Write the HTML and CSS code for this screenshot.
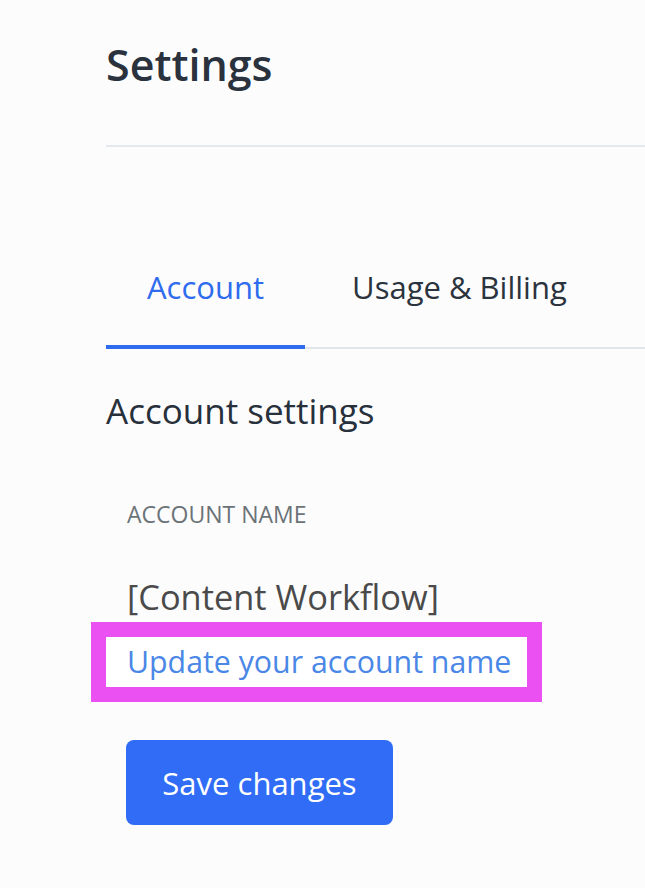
FILE: index.html
```html
<!DOCTYPE html>
<html lang="en">
<head>
<meta charset="utf-8">
<title>Settings</title>
<link rel="stylesheet" href="styles.css">
</head>
<body>
<main class="page">
  <header class="page-header">
    <h1 class="page-title">Settings</h1>
  </header>
  <nav class="tabs">
    <a class="tab tab-active" href="#">Account</a>
    <a class="tab" href="#">Usage &amp; Billing</a>
  </nav>
  <section class="panel">
    <h2 class="panel-title">Account settings</h2>
    <div class="field">
      <div class="field-label">Account name</div>
      <div class="field-value">[Content Workflow]</div>
      <a class="field-link" href="#">Update your account name</a>
    </div>
    <button class="btn-primary" type="button">Save changes</button>
  </section>
</main>
</body>
</html>
```

FILE: styles.css
```css
html, body {
  margin: 0;
  padding: 0;
  background: #fcfcfd;
}
body {
  font-family: "Open Sans", "Noto Sans", sans-serif;
  overflow: hidden;
}
.page {
  padding-left: 106px;
}
.page-header {
  padding-top: 37px;
  padding-bottom: 52px;
  border-bottom: 2px solid #e5e8ec;
}
.page-title {
  margin: 0;
  font-size: 43px;
  line-height: 56px;
  font-weight: 600;
  color: #29323d;
}
.tabs {
  display: flex;
  gap: 6px;
  margin-top: 120px;
  border-bottom: 2px solid #e2e5e9;
}
.tab {
  display: block;
  padding: 0 41px 38px;
  font-size: 31px;
  line-height: 40px;
  color: #2b333d;
  text-decoration: none;
}
.tab-active {
  color: #2f6bed;
  border-bottom: 4px solid #2f6bed;
  margin-bottom: -2px;
}
.panel {
  padding-top: 40px;
}
.panel-title {
  margin: 0;
  font-size: 35px;
  line-height: 44px;
  font-weight: 400;
  color: #27303b;
}
.field {
  margin-top: 67px;
}
.field-label {
  padding-left: 21px;
  font-size: 23px;
  line-height: 28px;
  text-transform: uppercase;
  color: #6b7377;
}
.field-value {
  padding-left: 21px;
  margin-top: 47px;
  font-size: 34.4px;
  line-height: 44px;
  color: #4a4a4a;
}
.field-link {
  display: block;
  width: fit-content;
  margin-top: 18px;
  padding: 0 16px 0 21px;
  font-size: 30.3px;
  line-height: 50px;
  color: #4a87e6;
  text-decoration: none;
  background: #ffffff;
  outline: 15px solid #ea50f2;
}
.btn-primary {
  display: block;
  margin-top: 53px;
  margin-left: 20px;
  width: 267px;
  height: 85px;
  border: none;
  border-radius: 8px;
  background: #306cf6;
  color: #ffffff;
  font-family: inherit;
  font-size: 31px;
  padding: 0;
}
```
